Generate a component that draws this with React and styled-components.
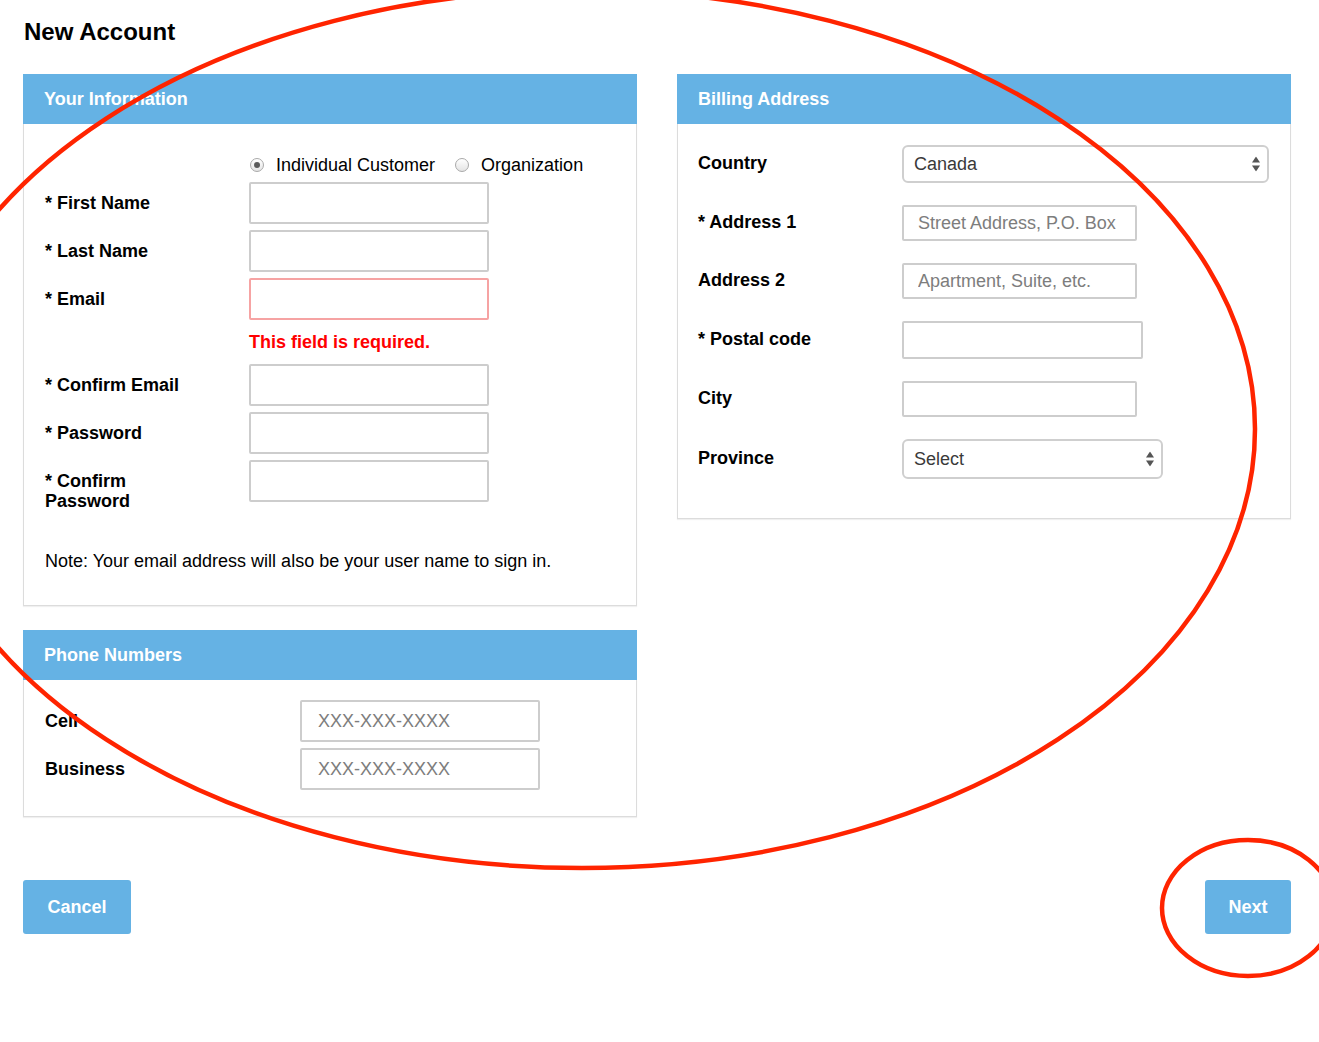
import React from 'react'
import styled, { createGlobalStyle } from 'styled-components'

const BLUE = '#65b2e4'

const GlobalStyle = createGlobalStyle`
  body {
    margin: 0;
    background: #fff;
    font-family: "Liberation Sans", Arial, Helvetica, sans-serif;
    color: #000;
  }
`

const Page = styled.div`
  position: relative;
  width: 1319px;
  min-height: 1042px;
  box-sizing: border-box;
  padding: 18px 28px 0 23px;
  overflow: hidden;
`

const Title = styled.h1`
  margin: 0 0 28px 1px;
  font-size: 24px;
  line-height: 28px;
  font-weight: bold;
`

const Columns = styled.div`
  display: grid;
  grid-template-columns: 614px 614px;
  column-gap: 40px;
  align-items: start;
`

const Column = styled.div`
  display: flex;
  flex-direction: column;
  gap: 24px;
`

const Panel = styled.section`
  width: 614px;
`

const PanelHeader = styled.header`
  height: 50px;
  background: ${BLUE};
  color: #fff;
  font-size: 18px;
  font-weight: bold;
  display: flex;
  align-items: center;
  padding-left: 21px;
`

const PanelBody = styled.div`
  border: 1px solid #dcdcdc;
  border-top: none;
  box-shadow: 0 1px 1px rgba(0, 0, 0, 0.06);
  padding: ${p => p.$pad};
`

const Row = styled.div`
  display: grid;
  grid-template-columns: ${p => p.$label}px auto;
  align-items: ${p => (p.$center ? 'center' : 'start')};
  margin-bottom: ${p => p.$gap ?? 6}px;
  &:last-child {
    margin-bottom: 0;
  }
`

const Label = styled.label`
  font-size: 18px;
  font-weight: bold;
  line-height: 20px;
  padding-top: ${p => (p.$center ? 0 : 11)}px;
  margin-top: ${p => (p.$center ? -2 : 0)}px;
`

const TextInput = styled.input`
  box-sizing: border-box;
  width: ${p => p.$w || 240}px;
  height: ${p => p.$h || 42}px;
  border: 2px solid ${p => (p.$error ? '#f6a3a3' : '#cdcdcd')};
  border-radius: 2px;
  background: #fff;
  padding: 0 ${p => p.$padX || 14}px;
  font-family: inherit;
  font-size: 18px;
  color: #333;
  outline: none;
  &::placeholder {
    color: #7d7d7d;
  }
`

const SelectWrap = styled.div`
  position: relative;
  width: ${p => p.$w}px;
  height: ${p => p.$h}px;
`

const Select = styled.select`
  appearance: none;
  box-sizing: border-box;
  width: 100%;
  height: 100%;
  border: 2px solid #cfcfcf;
  border-radius: 6px;
  background: #fff;
  padding: 0 30px 0 10px;
  font-family: inherit;
  font-size: 18px;
  color: #3a3a3a;
  outline: none;
`

const Arrows = styled.svg`
  position: absolute;
  right: ${p => p.$right}px;
  top: 50%;
  transform: translateY(-50%);
  pointer-events: none;
`

const RadioRow = styled.div`
  display: flex;
  align-items: center;
  height: 22px;
  margin: 0 0 6px 204px;
  font-size: 18px;
`

const RadioOption = styled.label`
  display: flex;
  align-items: center;
  gap: 12px;
  margin-right: 19px;
`

const Radio = styled.span`
  box-sizing: border-box;
  width: 14px;
  height: 14px;
  border-radius: 50%;
  border: 1px solid #a9a9a9;
  background: linear-gradient(#ffffff, #e4e4e4);
  display: flex;
  align-items: center;
  justify-content: center;
  margin-left: 1px;
  &::after {
    content: '';
    width: 6px;
    height: 6px;
    border-radius: 50%;
    background: ${p => (p.$checked ? '#5a5a5a' : 'transparent')};
  }
`

const ErrorText = styled.div`
  margin: 12px 0 12px 204px;
  color: #ff0000;
  font-size: 18px;
  font-weight: bold;
  line-height: 20px;
`

const Note = styled.p`
  margin: 40px 0 0;
  font-size: 18px;
  line-height: 20px;
`

const Actions = styled.div`
  display: flex;
  justify-content: space-between;
  margin-top: 63px;
`

const Button = styled.button`
  width: ${p => p.$w}px;
  height: 54px;
  border: none;
  border-radius: 3px;
  background: ${BLUE};
  color: #fff;
  font-family: inherit;
  font-size: 18px;
  font-weight: bold;
  cursor: pointer;
`

const Marks = styled.svg`
  position: absolute;
  left: 0;
  top: 0;
  pointer-events: none;
`

const UpDown = ({ right }) => (
  <Arrows $right={right} width="8" height="15" viewBox="0 0 8 15">
    <polygon points="0,6 4,0 8,6" fill="#555" />
    <polygon points="0,9 8,9 4,15" fill="#555" />
  </Arrows>
)

const Field = ({ label, error }) => (
  <Row $label={204}>
    <Label>{label}</Label>
    <TextInput $error={error} />
  </Row>
)

const App = () => {
  return (
    <Page>
      <GlobalStyle />
      <Title>New Account</Title>
      <Columns>
        <Column>
          <Panel>
            <PanelHeader>Your Information</PanelHeader>
            <PanelBody $pad="30px 20px 34px 21px">
              <RadioRow>
                <RadioOption>
                  <Radio $checked />
                  Individual Customer
                </RadioOption>
                <RadioOption>
                  <Radio />
                  Organization
                </RadioOption>
              </RadioRow>
              <Field label="* First Name" />
              <Field label="* Last Name" />
              <Row $label={204} $gap={0}>
                <Label>* Email</Label>
                <TextInput $error />
              </Row>
              <ErrorText>This field is required.</ErrorText>
              <Field label="* Confirm Email" />
              <Field label="* Password" />
              <Row $label={204}>
                <Label>* Confirm<br />Password</Label>
                <TextInput />
              </Row>
              <Note>Note: Your email address will also be your user name to sign in.</Note>
            </PanelBody>
          </Panel>

          <Panel>
            <PanelHeader>Phone Numbers</PanelHeader>
            <PanelBody $pad="20px 20px 26px 21px">
              <Row $label={255}>
                <Label>Cell</Label>
                <TextInput placeholder="XXX-XXX-XXXX" $padX={16} />
              </Row>
              <Row $label={255}>
                <Label>Business</Label>
                <TextInput placeholder="XXX-XXX-XXXX" $padX={16} />
              </Row>
            </PanelBody>
          </Panel>
        </Column>

        <Column>
          <Panel>
            <PanelHeader>Billing Address</PanelHeader>
            <PanelBody $pad="21px 20px 39px 20px">
              <Row $label={204} $center $gap={22}>
                <Label $center>Country</Label>
                <SelectWrap $w={367} $h={38}>
                  <Select defaultValue="CA">
                    <option value="CA">Canada</option>
                    <option value="US">United States</option>
                  </Select>
                  <UpDown right={9} />
                </SelectWrap>
              </Row>
              <Row $label={204} $center $gap={22}>
                <Label $center>* Address 1</Label>
                <TextInput $w={235} $h={36} placeholder="Street Address, P.O. Box" />
              </Row>
              <Row $label={204} $center $gap={22}>
                <Label $center>Address 2</Label>
                <TextInput $w={235} $h={36} placeholder="Apartment, Suite, etc." />
              </Row>
              <Row $label={204} $center $gap={22}>
                <Label $center>* Postal code</Label>
                <TextInput $w={241} $h={38} />
              </Row>
              <Row $label={204} $center $gap={22}>
                <Label $center>City</Label>
                <TextInput $w={235} $h={36} />
              </Row>
              <Row $label={204} $center $gap={22}>
                <Label $center>Province</Label>
                <SelectWrap $w={261} $h={40}>
                  <Select defaultValue="">
                    <option value="">Select</option>
                    <option value="ON">Ontario</option>
                  </Select>
                  <UpDown right={9} />
                </SelectWrap>
              </Row>
            </PanelBody>
          </Panel>
        </Column>
      </Columns>

      <Actions>
        <Button $w={108}>Cancel</Button>
        <Button $w={86}>Next</Button>
      </Actions>

      <Marks width="1319" height="1042" viewBox="0 0 1319 1042">
        <ellipse cx="582" cy="429" rx="673" ry="439" fill="none" stroke="#ff2400" strokeWidth="4.5" />
        <ellipse cx="1248" cy="908" rx="86" ry="68" fill="none" stroke="#ff2400" strokeWidth="4.5" />
      </Marks>
    </Page>
  )
}

export default App
